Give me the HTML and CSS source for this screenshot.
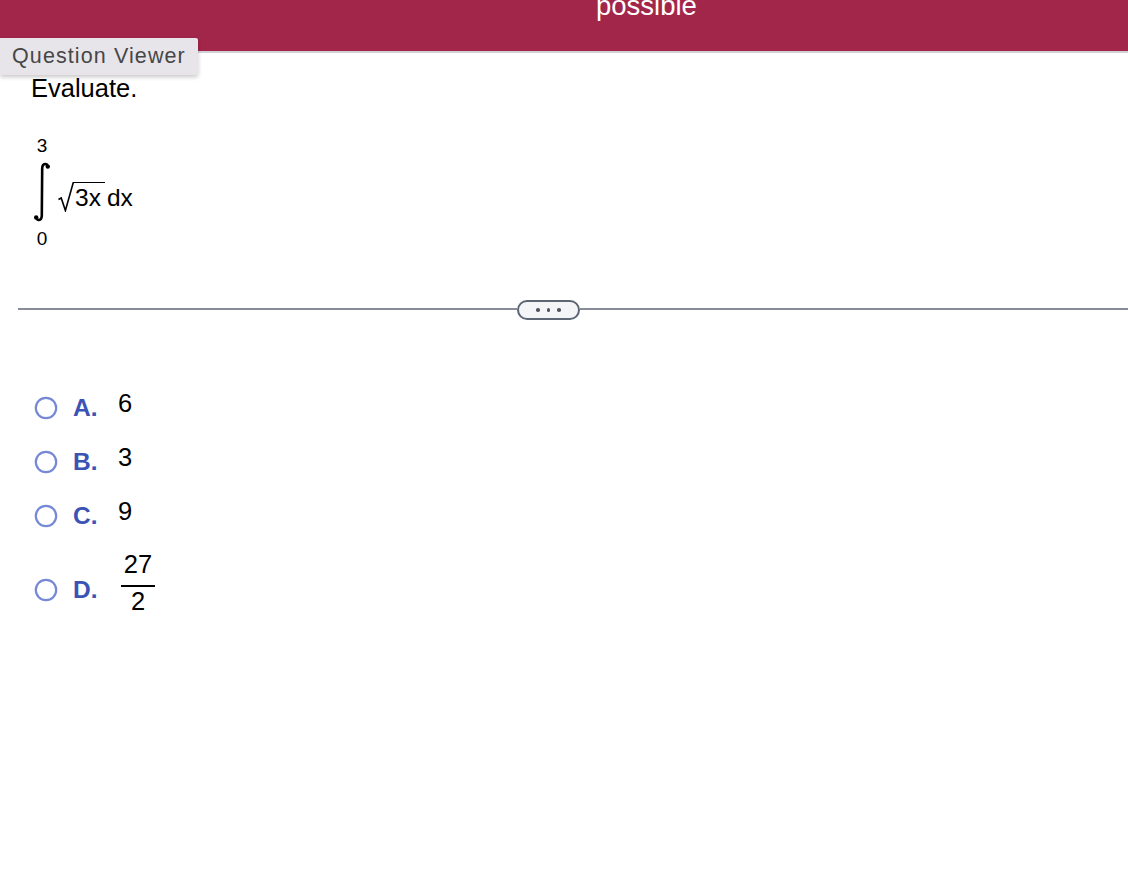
FILE: index.html
```html
<!DOCTYPE html>
<html lang="en">
<head>
<meta charset="utf-8">
<title>Question Viewer</title>
<link rel="stylesheet" href="styles.css">
</head>
<body>
<header class="topbar"><span class="topbar-title">possible</span></header>
<div class="tab">Question Viewer</div>
<main class="content">
  <p class="prompt">Evaluate.</p>
  <div class="integral">
    <div class="limits">
      <span class="limit">3</span>
      <svg class="int-sign" width="18" height="60" viewBox="0 0 18 60" aria-hidden="true">
        <path d="M15,4.6 C14,1.2 9.6,0.8 9.2,6 L8.8,54 C8.4,59.2 4,58.8 3,55.4" fill="none" stroke="#000" stroke-width="2.6" stroke-linecap="round"/>
        <circle cx="14.8" cy="4.6" r="2.2" fill="#000"/>
        <circle cx="3.2" cy="55.4" r="2.2" fill="#000"/>
      </svg>
      <span class="limit">0</span>
    </div>
    <div class="integrand">
      <span class="sqrt">
        <svg class="radical" width="17" height="30" viewBox="0 0 17 30" aria-hidden="true">
          <path d="M1.5,17.5 L4.2,16 L8.4,28.5 L16.2,0.8 L17,0.8" fill="none" stroke="#000" stroke-width="1.6" stroke-linejoin="miter"/>
        </svg><span class="radicand">3x</span></span><span class="dx">dx</span>
    </div>
  </div>
</main>
<div class="divider">
  <span class="rule rule-left"></span>
  <span class="more"><i class="dot"></i><i class="dot"></i><i class="dot"></i></span>
  <span class="rule rule-right"></span>
</div>
<ul class="options">
  <li class="option">
    <svg class="radio" width="24" height="24" viewBox="0 0 24 24" aria-hidden="true"><circle cx="12" cy="12" r="10.2" fill="#fff" stroke="#7689d6" stroke-width="2.2"/></svg>
    <span class="letter">A.</span><span class="value">6</span>
  </li>
  <li class="option">
    <svg class="radio" width="24" height="24" viewBox="0 0 24 24" aria-hidden="true"><circle cx="12" cy="12" r="10.2" fill="#fff" stroke="#7689d6" stroke-width="2.2"/></svg>
    <span class="letter">B.</span><span class="value">3</span>
  </li>
  <li class="option">
    <svg class="radio" width="24" height="24" viewBox="0 0 24 24" aria-hidden="true"><circle cx="12" cy="12" r="10.2" fill="#fff" stroke="#7689d6" stroke-width="2.2"/></svg>
    <span class="letter">C.</span><span class="value">9</span>
  </li>
  <li class="option option-tall">
    <svg class="radio" width="24" height="24" viewBox="0 0 24 24" aria-hidden="true"><circle cx="12" cy="12" r="10.2" fill="#fff" stroke="#7689d6" stroke-width="2.2"/></svg>
    <span class="letter">D.</span>
    <span class="fraction"><span class="num">27</span><span class="bar"></span><span class="den">2</span></span>
  </li>
</ul>
</body>
</html>
```

FILE: styles.css
```css
html, body {
  margin: 0;
  padding: 0;
  background: #fff;
}
body {
  font-family: "Liberation Sans", Arial, Helvetica, sans-serif;
  color: #000;
  position: relative;
  width: 1128px;
  min-height: 876px;
  overflow: hidden;
}
.topbar {
  height: 51px;
  background: #a2264a;
  border-bottom: 2px solid #d3d1d8;
  overflow: hidden;
  box-sizing: content-box;
}
.topbar-title {
  display: block;
  margin-top: -8px;
  padding-left: 596px;
  font-size: 27.5px;
  line-height: 27px;
  color: #fff;
}
.tab {
  position: absolute;
  top: 38px;
  left: 0;
  width: 198px;
  height: 37px;
  box-sizing: border-box;
  padding-left: 12px;
  background: #e7e5e9;
  color: #474747;
  font-size: 21.5px;
  letter-spacing: 1.1px;
  line-height: 37px;
  border-radius: 0 2px 2px 0;
  box-shadow: 0 2px 4px rgba(0, 0, 0, 0.22);
}
.content {
  padding: 20px 0 0 31px;
}
.prompt {
  margin: 0;
  font-size: 25.5px;
  line-height: 30px;
}
.integral {
  display: flex;
  align-items: center;
  margin-top: 33px;
  margin-left: 2px;
}
.limits {
  display: flex;
  flex-direction: column;
  align-items: center;
  width: 18px;
}
.limit {
  font-size: 19px;
  line-height: 20px;
}
.int-sign {
  display: block;
  margin: 6px 0 7px;
}
.integrand {
  display: flex;
  align-items: flex-end;
  margin-top: 8px;
  margin-left: 6px;
  font-size: 24.5px;
}
.sqrt {
  display: inline-flex;
  align-items: flex-start;
}
.radical {
  display: block;
}
.radicand {
  display: block;
  border-top: 1.6px solid #000;
  padding: 1px 4px 0 1px;
  line-height: 28px;
}
.dx {
  display: block;
  margin-left: 2px;
  line-height: 28px;
}
.divider {
  display: flex;
  align-items: center;
  margin: 51px 0 0 18px;
  height: 20px;
}
.rule {
  display: block;
  height: 2px;
  margin-top: -2px;
  background: #878c98;
}
.rule-left {
  width: 499px;
}
.rule-right {
  flex: 1;
}
.more {
  display: flex;
  align-items: center;
  justify-content: center;
  gap: 7px;
  width: 63px;
  height: 20px;
  box-sizing: border-box;
  border: 2px solid #5e6675;
  border-radius: 10px;
  background: #f4f5f7;
}
.dot {
  display: block;
  width: 3.6px;
  height: 3.6px;
  border-radius: 50%;
  background: #4f5561;
}
.options {
  list-style: none;
  margin: 61px 0 0 34px;
  padding: 0;
}
.option {
  display: flex;
  align-items: center;
  height: 54px;
}
.option-tall {
  height: 80px;
  margin-top: 7px;
}
.radio {
  display: block;
  flex: none;
}
.letter {
  width: 45px;
  margin-left: 15px;
  font-weight: bold;
  font-size: 24.5px;
  color: #3a53b5;
  line-height: 28px;
}
.value {
  font-size: 25.5px;
  line-height: 28px;
  padding-bottom: 10px;
}
.fraction {
  display: inline-flex;
  flex-direction: column;
  align-items: stretch;
  margin-left: 3px;
  padding-bottom: 16px;
  font-size: 25.5px;
  text-align: center;
}
.num, .den {
  display: block;
  line-height: 28px;
}
.num {
  margin-bottom: 7px;
}
.bar {
  display: block;
  height: 2px;
  width: 34px;
  background: #000;
}
```
